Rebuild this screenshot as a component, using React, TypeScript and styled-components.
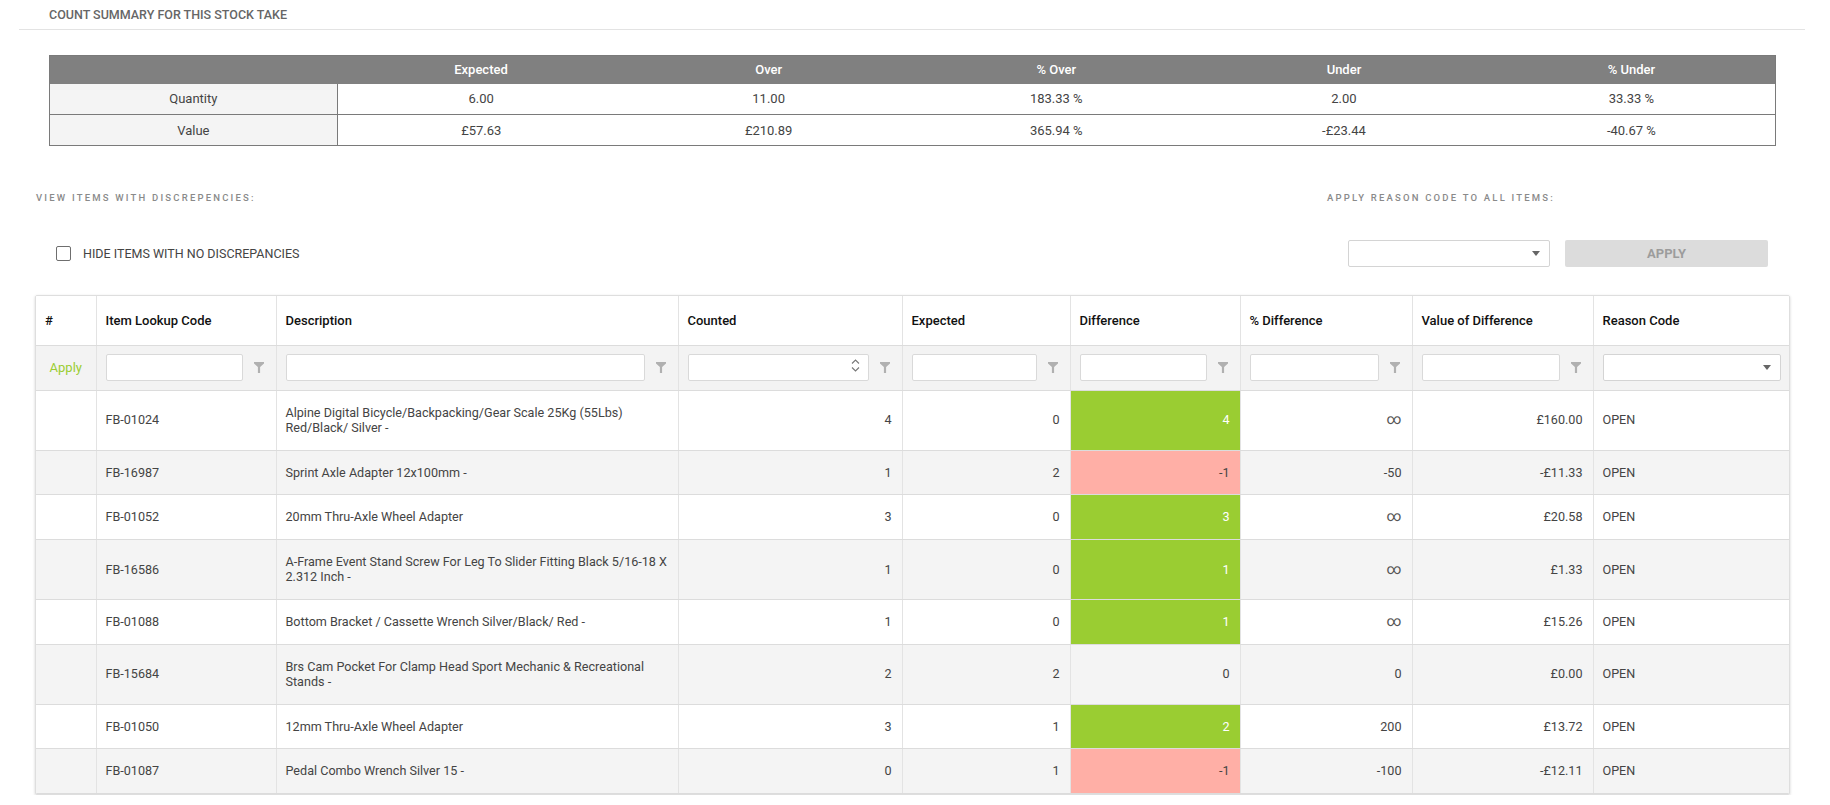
import React from "react";
import styled, { createGlobalStyle } from "styled-components";

const GlobalStyle = createGlobalStyle`
  html, body {
    margin: 0;
    padding: 0;
    background: #fff;
  }
  body {
    font-family: Roboto, "Liberation Sans", Arial, sans-serif;
    color: #444;
  }
  * {
    box-sizing: border-box;
  }
`;

const Page = styled.div`
  padding: 0 25px 0 19px;
`;

const SectionTitle = styled.div`
  padding: 8px 30px 7px;
  border-bottom: 1px solid #e3e3e3;
  font-size: 12.5px;
  line-height: 14px;
  font-weight: 500;
  color: #666;
  text-transform: uppercase;
`;

const SummaryWrap = styled.div`
  padding: 25px 29px 0 30px;
`;

const SummaryTable = styled.table`
  width: 100%;
  table-layout: fixed;
  border-collapse: collapse;
  border: 1px solid #7a7a7a;
  font-size: 13px;

  th {
    height: 28px;
    background: #808080;
    color: #fff;
    font-weight: 500;
    text-align: center;
  }

  td {
    height: 31px;
    text-align: center;
    color: #444;
    background: #fff;
  }

  td:first-child {
    background: #f4f4f4;
    border-right: 1px solid #7a7a7a;
  }

  tbody tr + tr td {
    border-top: 1px solid #7a7a7a;
  }
`;

const Discrepancies = styled.div`
  padding: 0 15px 0 16px;
`;

const Toolbar = styled.div`
  margin-top: 46px;
  display: grid;
  grid-template-columns: 1fr 464px;
`;

const ToolColumn = styled.div`
  display: flex;
  flex-direction: column;
`;

const SmallLabel = styled.div`
  font-size: 9.5px;
  line-height: 12px;
  font-weight: 500;
  letter-spacing: 2.2px;
  color: #8a8a8a;
  text-transform: uppercase;
  padding-left: 1px;
`;

const ControlRow = styled.div<{ $inset: number }>`
  margin-top: 36px;
  height: 27px;
  display: flex;
  align-items: center;
  gap: 15px;
  padding: 0 ${(p) => p.$inset}px;
`;

const CheckBox = styled.span`
  width: 15px;
  height: 15px;
  border: 1.5px solid #6e6e6e;
  border-radius: 2px;
  background: #fff;
  flex: none;
`;

const CheckLabel = styled.span`
  margin-left: -3px;
  font-size: 12.5px;
  color: #444;
  text-transform: uppercase;
`;

const SelectBox = styled.div<{ $width?: number }>`
  position: relative;
  height: 27px;
  width: ${(p) => (p.$width ? `${p.$width}px` : "100%")};
  flex: ${(p) => (p.$width ? "none" : "1")};
  border: 1px solid #d4d4d4;
  border-radius: 2px;
  background: #fff;
  display: flex;
  align-items: center;
  justify-content: flex-end;
  padding-right: 9px;
`;

const Caret = styled.span`
  width: 0;
  height: 0;
  border-left: 4px solid transparent;
  border-right: 4px solid transparent;
  border-top: 5px solid #666;
`;

const ApplyButton = styled.button`
  flex: 1;
  height: 27px;
  border: none;
  border-radius: 2px;
  background: #dcdcdc;
  color: #9c9c9c;
  font-family: inherit;
  font-size: 13px;
  font-weight: 700;
  text-transform: uppercase;
`;

const GridWrap = styled.div`
  margin-top: 28px;
  border: 1px solid #dedede;
  border-radius: 2px;
  box-shadow: 0 1px 3px rgba(0, 0, 0, 0.18);
  overflow: hidden;
`;

const Grid = styled.table`
  width: 100%;
  table-layout: fixed;
  border-collapse: collapse;
  font-size: 13px;
`;

const HeadCell = styled.th`
  height: 49px;
  padding: 0 9px;
  text-align: left;
  font-weight: 500;
  color: #111;
  background: #fff;
  border-bottom: 1px solid #dcdcdc;
  & + & {
    border-left: 1px solid #e3e3e3;
  }
`;

const FilterCell = styled.td`
  height: 45px;
  padding: 0 0 0 9px;
  background: #f3f3f3;
  border-bottom: 1px solid #dcdcdc;
  & + & {
    border-left: 1px solid #e3e3e3;
  }
`;

const ApplyLink = styled.div`
  text-align: center;
  padding-right: 9px;
  color: #9acd32;
  font-size: 13px;
`;

const FilterBox = styled.div`
  display: flex;
  align-items: center;
`;

const FilterInput = styled.div`
  position: relative;
  flex: 1;
  height: 27px;
  background: #fff;
  border: 1px solid #d9d9d9;
  border-radius: 2px;
`;

const Spinner = styled.div`
  position: absolute;
  right: 8px;
  top: 4px;
  display: flex;
  flex-direction: column;
  gap: 3px;
`;

const FunnelSlot = styled.div`
  width: 33px;
  display: flex;
  justify-content: center;
`;

const Row = styled.tr<{ $alt: boolean }>`
  background: ${(p) => (p.$alt ? "#f4f4f4" : "#fff")};
`;

const Cell = styled.td<{ $align?: "left" | "right"; $tone?: "over" | "under" }>`
  padding: 14px 10px 14px 9px;
  font-size: 12.6px;
  line-height: 15.6px;
  color: ${(p) => (p.$tone === "over" ? "#fff" : "#444")};
  text-align: ${(p) => p.$align ?? "left"};
  vertical-align: middle;
  background: ${(p) =>
    p.$tone === "over" ? "#9acd32" : p.$tone === "under" ? "#ffafa6" : "transparent"};
  border-bottom: 1px solid #dcdcdc;
  & + & {
    border-left: 1px solid #e3e3e3;
  }
`;

const DescCell = styled(Cell)`
  padding-right: 8px;
`;

const InfinityMark = styled.span`
  font-size: 14.5px;
  line-height: 15px;
  color: #555;
`;

const Funnel = () => (
  <svg width="10" height="11" viewBox="0 0 10 11">
    <polygon points="0,0 10,0 10,1.6 6.1,5 6.1,11 3.9,11 3.9,5 0,1.6" fill="#b0b0b0" />
  </svg>
);

const Chevron = ({ up }: { up?: boolean }) => (
  <svg width="9" height="5" viewBox="0 0 9 5">
    <polyline
      points={up ? "1,4.5 4.5,1 8,4.5" : "1,0.5 4.5,4 8,0.5"}
      fill="none"
      stroke="#777"
      strokeWidth="1.1"
    />
  </svg>
);

const columns = [
  { title: "#", width: 60 },
  { title: "Item Lookup Code", width: 180 },
  { title: "Description", width: 402 },
  { title: "Counted", width: 224 },
  { title: "Expected", width: 168 },
  { title: "Difference", width: 170 },
  { title: "% Difference", width: 172 },
  { title: "Value of Difference", width: 181 },
  { title: "Reason Code", width: 198 },
];

const items = [
  { code: "FB-01024", desc: "Alpine Digital Bicycle/Backpacking/Gear Scale 25Kg (55Lbs) Red/Black/ Silver -", counted: 4, expected: 0, pct: "∞", value: "£160.00" },
  { code: "FB-16987", desc: "Sprint Axle Adapter 12x100mm -", counted: 1, expected: 2, pct: "-50", value: "-£11.33" },
  { code: "FB-01052", desc: "20mm Thru-Axle Wheel Adapter", counted: 3, expected: 0, pct: "∞", value: "£20.58" },
  { code: "FB-16586", desc: "A-Frame Event Stand Screw For Leg To Slider Fitting Black 5/16-18 X 2.312 Inch -", counted: 1, expected: 0, pct: "∞", value: "£1.33" },
  { code: "FB-01088", desc: "Bottom Bracket / Cassette Wrench Silver/Black/ Red -", counted: 1, expected: 0, pct: "∞", value: "£15.26" },
  { code: "FB-15684", desc: "Brs Cam Pocket For Clamp Head Sport Mechanic & Recreational Stands -", counted: 2, expected: 2, pct: "0", value: "£0.00" },
  { code: "FB-01050", desc: "12mm Thru-Axle Wheel Adapter", counted: 3, expected: 1, pct: "200", value: "£13.72" },
  { code: "FB-01087", desc: "Pedal Combo Wrench Silver 15 -", counted: 0, expected: 1, pct: "-100", value: "-£12.11" },
];

const summaryHead = ["", "Expected", "Over", "% Over", "Under", "% Under"];
const summaryRows = [
  ["Quantity", "6.00", "11.00", "183.33 %", "2.00", "33.33 %"],
  ["Value", "£57.63", "£210.89", "365.94 %", "-£23.44", "-40.67 %"],
];

const TextFilter = ({ spinner }: { spinner?: boolean }) => (
  <FilterBox>
    <FilterInput>
      {spinner && (
        <Spinner>
          <Chevron up />
          <Chevron />
        </Spinner>
      )}
    </FilterInput>
    <FunnelSlot>
      <Funnel />
    </FunnelSlot>
  </FilterBox>
);

export default function App() {
  return (
    <Page>
      <GlobalStyle />
      <SectionTitle>Count summary for this stock take</SectionTitle>

      <SummaryWrap>
        <SummaryTable>
          <thead>
            <tr>
              {summaryHead.map((h, i) => (
                <th key={i}>{h}</th>
              ))}
            </tr>
          </thead>
          <tbody>
            {summaryRows.map((r) => (
              <tr key={r[0]}>
                {r.map((c, i) => (
                  <td key={i}>{c}</td>
                ))}
              </tr>
            ))}
          </tbody>
        </SummaryTable>
      </SummaryWrap>

      <Discrepancies>
        <Toolbar>
          <ToolColumn>
            <SmallLabel>View items with discrepencies:</SmallLabel>
            <ControlRow $inset={21}>
              <CheckBox />
              <CheckLabel>Hide items with no discrepancies</CheckLabel>
            </ControlRow>
          </ToolColumn>
          <ToolColumn>
            <SmallLabel>Apply reason code to all items:</SmallLabel>
            <ControlRow $inset={22}>
              <SelectBox $width={202}>
                <Caret />
              </SelectBox>
              <ApplyButton>Apply</ApplyButton>
            </ControlRow>
          </ToolColumn>
        </Toolbar>

        <GridWrap>
          <Grid>
            <colgroup>
              {columns.map((c) => (
                <col key={c.title} style={{ width: c.width }} />
              ))}
            </colgroup>
            <thead>
              <tr>
                {columns.map((c) => (
                  <HeadCell key={c.title}>{c.title}</HeadCell>
                ))}
              </tr>
              <tr>
                <FilterCell>
                  <ApplyLink>Apply</ApplyLink>
                </FilterCell>
                <FilterCell>
                  <TextFilter />
                </FilterCell>
                <FilterCell>
                  <TextFilter />
                </FilterCell>
                <FilterCell>
                  <TextFilter spinner />
                </FilterCell>
                <FilterCell>
                  <TextFilter />
                </FilterCell>
                <FilterCell>
                  <TextFilter />
                </FilterCell>
                <FilterCell>
                  <TextFilter />
                </FilterCell>
                <FilterCell>
                  <TextFilter />
                </FilterCell>
                <FilterCell style={{ paddingRight: 10 }}>
                  <SelectBox>
                    <Caret />
                  </SelectBox>
                </FilterCell>
              </tr>
            </thead>
            <tbody>
              {items.map((it, i) => {
                const diff = it.counted - it.expected;
                const tone = diff > 0 ? "over" : diff < 0 ? "under" : undefined;
                return (
                  <Row key={it.code} $alt={i % 2 === 1}>
                    <Cell />
                    <Cell>{it.code}</Cell>
                    <DescCell>{it.desc}</DescCell>
                    <Cell $align="right">{it.counted}</Cell>
                    <Cell $align="right">{it.expected}</Cell>
                    <Cell $align="right" $tone={tone}>
                      {diff}
                    </Cell>
                    <Cell $align="right">
                      {it.pct === "∞" ? <InfinityMark>∞</InfinityMark> : it.pct}
                    </Cell>
                    <Cell $align="right">{it.value}</Cell>
                    <Cell>OPEN</Cell>
                  </Row>
                );
              })}
            </tbody>
          </Grid>
        </GridWrap>
      </Discrepancies>
    </Page>
  );
}
